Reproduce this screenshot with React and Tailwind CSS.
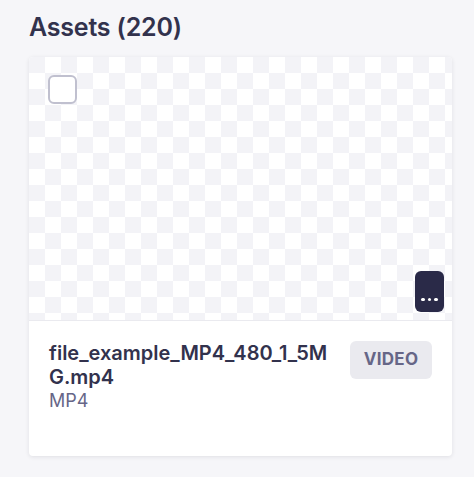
export default function App() {
  return (
    <div className="w-[474px] h-[477px] bg-[#f6f6f9] overflow-hidden" style={{ fontFamily: "Inter, 'Liberation Sans', sans-serif" }}>
      <div className="pl-[29px] pr-[22px] pt-[11px]">
        <h1 className="text-[25px] leading-[32px] font-semibold text-[#32324d] tracking-[-0.2px]">Assets (220)</h1>
        <div className="mt-[14px] bg-white rounded-[4px] shadow-[0_1px_4px_rgba(33,33,52,0.1)] overflow-hidden">
          <div className="relative h-[264px] bg-[conic-gradient(#ffffff_25%,#f3f3f7_0_50%,#ffffff_0_75%,#f3f3f7_0)] bg-[length:32px_32px] border-b border-[#eaeaef]">
            <div className="absolute left-[19px] top-[18px] w-[29px] h-[29px] rounded-[6px] border-2 border-[#c0c0cf] bg-white" />
            <div className="absolute right-[8px] bottom-[8px] w-[29px] h-[41px] rounded-[6px] bg-[#2a2a48] flex items-end justify-center pb-[11px] gap-[3px]">
              <span className="w-[3.5px] h-[3.5px] rounded-full bg-white" />
              <span className="w-[3.5px] h-[3.5px] rounded-full bg-white" />
              <span className="w-[3.5px] h-[3.5px] rounded-full bg-white" />
            </div>
          </div>
          <div className="h-[135px] pl-[20px] pr-[20px] pt-[20px] flex items-start gap-[18px]">
            <div className="flex-1 min-w-0">
              <div className="text-[20px] leading-[24px] font-semibold text-[#32324d] break-all">file_example_MP4_480_1_5MG.mp4</div>
              <div className="text-[18px] leading-[24px] text-[#666687]">MP4</div>
            </div>
            <div className="shrink-0 w-[82px] h-[38px] rounded-[6px] bg-[#eaeaef] flex items-center justify-center text-[17px] font-bold text-[#666687] tracking-[0.3px]">VIDEO</div>
          </div>
        </div>
      </div>
    </div>
  );
}
